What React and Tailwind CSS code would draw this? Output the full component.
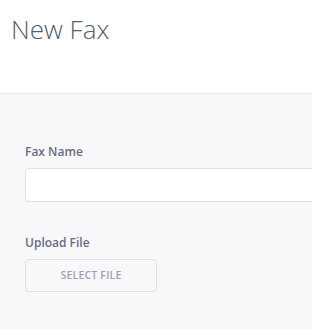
import React from "react";

const App = () => {
  return (
    <div className="min-h-screen bg-[#f8f8fa] overflow-hidden" style={{ fontFamily: "'Open Sans', sans-serif" }}>
      {/* header */}
      <div className="h-[94px] bg-white border-b border-[#e6e6ec] pl-[11px] pt-[11px]">
        <h1 className="text-[26px] font-light text-[#555d6c] leading-[36px]">New Fax</h1>
      </div>

      <div className="pl-[25px] pt-[50px]">
        <label className="block text-[12px] font-semibold text-[#686c80] leading-4 mb-[8px]">Fax Name</label>
        <input
          type="text"
          className="block w-[320px] h-[34px] bg-white border border-[#e0e0e5] rounded-[4px] outline-none"
        />

        <label className="block text-[12px] font-semibold text-[#686c80] leading-4 mt-[33px] mb-[8px]">Upload File</label>
        <button className="w-[132px] h-[33px] bg-[#f8f8fa] border border-[#e0e0e5] rounded-[4px] text-[10.5px] text-[#9ea3b0] font-semibold tracking-[0.2px]">
          SELECT FILE
        </button>
      </div>
    </div>
  );
};

export default App;
